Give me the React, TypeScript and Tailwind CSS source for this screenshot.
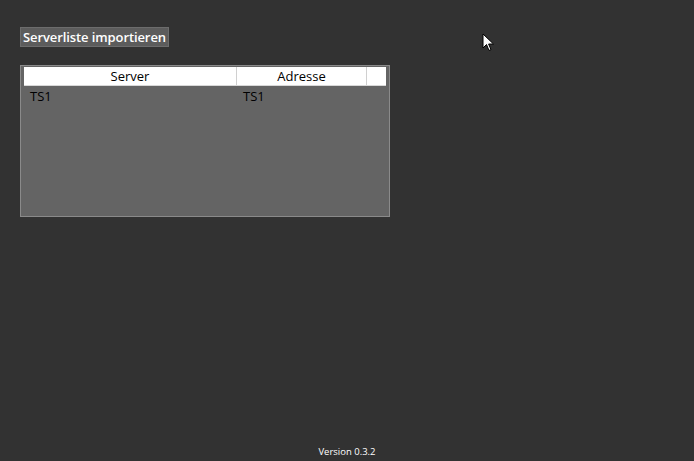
import React from 'react';

const rows = [{ server: 'TS1', address: 'TS1' }];

const App: React.FC = () => {
    return (
        <div
            className="relative w-[694px] h-[461px] bg-[#323232] overflow-hidden"
            style={{ fontFamily: '"Open Sans", "DejaVu Sans", sans-serif' }}
        >
            <div className="pl-[20px] pt-[27px]">
                <button className="block h-[20px] w-[149px] bg-[#5c5c5c] border border-[#6c6c6c] text-white text-[13px] font-semibold leading-none tracking-[-0.1px]">
                    Serverliste importieren
                </button>

                {/* server table */}
                <div className="mt-[18px] w-[370px] h-[152px] bg-[#646464] border border-[#8a8a8a] p-[3px] pt-[1px]">
                    <div className="flex h-[19px] bg-white border-b border-[#d8d8d8] text-[13px] font-medium text-black leading-none">
                        <div className="w-[213px] flex items-center justify-center border-r border-[#d0d0d0]">Server</div>
                        <div className="w-[130px] flex items-center justify-center border-r border-[#d0d0d0]">Adresse</div>
                        <div className="flex-1" />
                    </div>
                    {rows.map((r, i) => (
                        <div key={i} className="flex h-[21px] items-center text-[13px] font-medium text-black leading-none">
                            <div className="w-[213px] pl-[6px]">{r.server}</div>
                            <div className="w-[130px] pl-[6px]">{r.address}</div>
                        </div>
                    ))}
                </div>
            </div>

            <div className="absolute bottom-[2px] left-0 right-0 text-center text-white text-[9.5px] font-medium">
                Version 0.3.2
            </div>

            {/* mouse pointer */}
            <svg className="absolute left-[482px] top-[33px]" width="14" height="20" viewBox="0 0 14 20">
                <path d="M1 1 L1 15 L4.5 11.5 L7 17.5 L9 16.6 L6.6 11 L11.5 11 Z" fill="white" stroke="black" strokeWidth="1" />
            </svg>
        </div>
    );
};

export default App;
